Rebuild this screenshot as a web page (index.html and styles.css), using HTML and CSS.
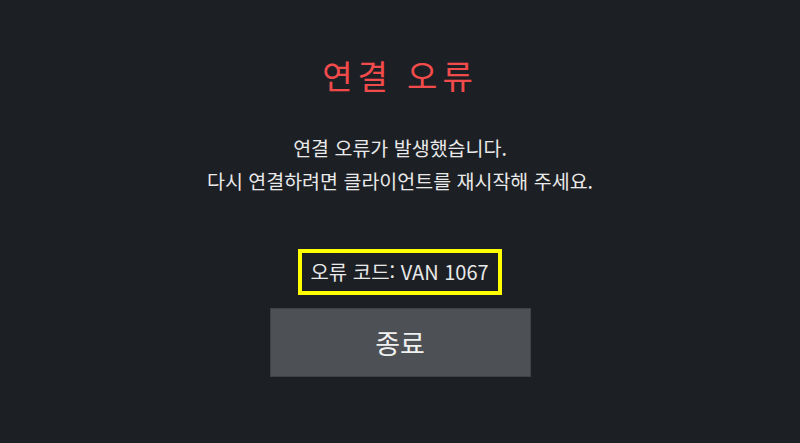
FILE: index.html
```html
<!DOCTYPE html>
<html lang="ko">
<head>
<meta charset="utf-8">
<title>연결 오류</title>
<link rel="stylesheet" href="styles.css">
</head>
<body>
<main class="dialog">
  <h1 class="dialog-title">연결 오류</h1>
  <p class="dialog-message">연결 오류가 발생했습니다.<br>다시 연결하려면 클라이언트를 재시작해 주세요.</p>
  <div class="error-code">오류 코드: VAN 1067</div>
  <button class="quit-button" type="button">종료</button>
</main>
</body>
</html>
```
FILE: styles.css
```css
html, body {
  margin: 0;
  padding: 0;
  height: 100%;
}

body {
  background: #1c1f24;
  font-family: "Noto Sans CJK KR", "Noto Sans", sans-serif;
  color: #e9e9e9;
}

.dialog {
  display: flex;
  flex-direction: column;
  align-items: center;
  padding-top: 53px;
}

.dialog-title {
  margin: 0;
  font-size: 33px;
  font-weight: 400;
  line-height: 44px;
  letter-spacing: 5px;
  color: #f24b4b;
}

.dialog-message {
  margin: 34px 0 0;
  font-size: 19.5px;
  line-height: 33px;
  text-align: center;
}

.error-code {
  margin-top: 52px;
  border: 4px solid #ffff00;
  padding: 4px 9px 4px 8px;
  font-size: 20px;
  line-height: 30px;
}

.quit-button {
  margin-top: 13px;
  width: 261px;
  height: 69px;
  background: #4d5055;
  border: 1px solid #3e4146;
  color: #f0f0f0;
  font-family: inherit;
  font-size: 27px;
  padding: 0;
}
```
